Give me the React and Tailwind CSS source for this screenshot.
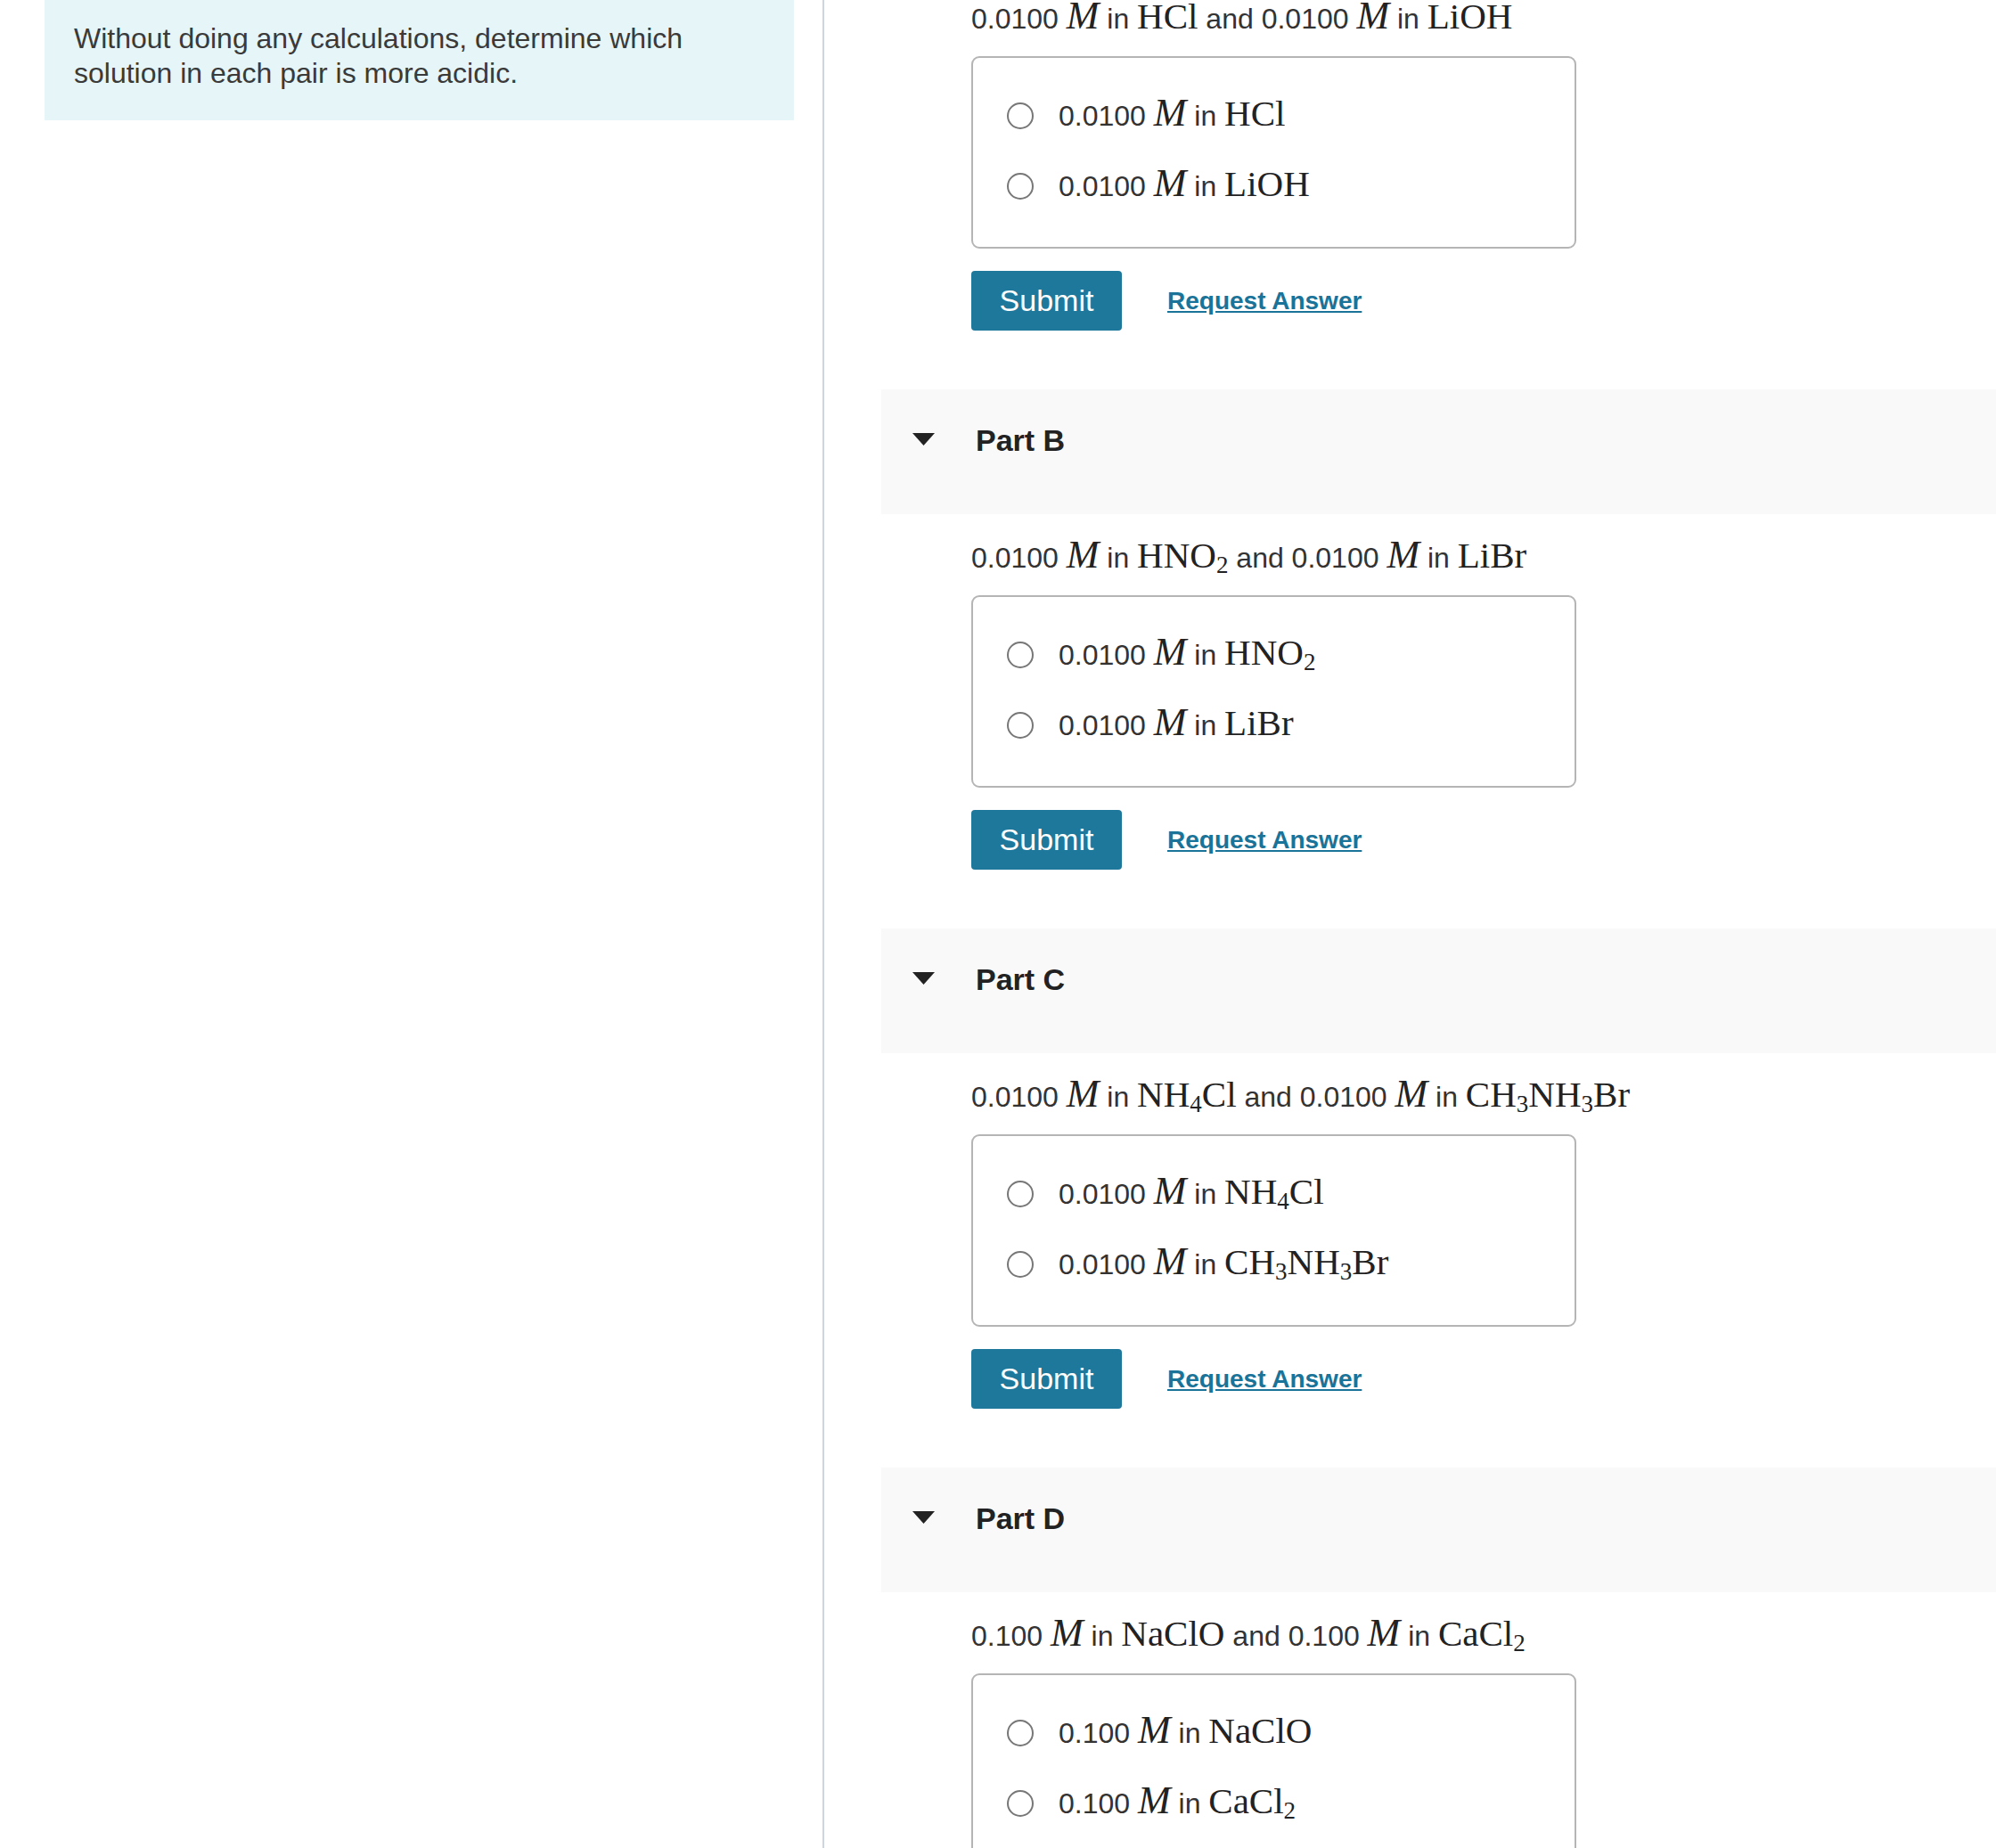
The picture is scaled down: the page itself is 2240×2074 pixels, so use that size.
import React from 'react';

// chemistry question page: scrolled past the Part A header
const serif = "font-['Liberation_Serif','Times_New_Roman',serif] text-[#222]";

function Chem({ children }) {
  return <span className={`${serif} text-[41px] leading-[36px]`}>{children}</span>;
}

function M() {
  return <span className={`${serif} text-[44px] leading-[36px] italic`}>M</span>;
}

function Sub({ children }) {
  return <span className="relative top-[6px] text-[27px]">{children}</span>;
}

function Conc({ n, f }) {
  return (
    <>
      {n} <M /> in <Chem>{f}</Chem>
    </>
  );
}

const parts = [
  {
    label: null,
    a: { n: '0.0100', f: 'HCl' },
    b: { n: '0.0100', f: 'LiOH' },
  },
  {
    label: 'Part B',
    a: { n: '0.0100', f: <>HNO<Sub>2</Sub></> },
    b: { n: '0.0100', f: 'LiBr' },
  },
  {
    label: 'Part C',
    a: { n: '0.0100', f: <>NH<Sub>4</Sub>Cl</> },
    b: { n: '0.0100', f: <>CH<Sub>3</Sub>NH<Sub>3</Sub>Br</> },
  },
  {
    label: 'Part D',
    a: { n: '0.100', f: 'NaClO' },
    b: { n: '0.100', f: <>CaCl<Sub>2</Sub></> },
  },
];

function Option({ name, item }) {
  return (
    <label className="flex h-[48px] items-center">
      <input
        type="radio"
        name={name}
        className="h-[30px] w-[30px] shrink-0 appearance-none rounded-full border-2 border-[#777] bg-white"
      />
      <span className="ml-[28px] text-[32px] leading-[48px] text-[#333]">
        <Conc n={item.n} f={item.f} />
      </span>
    </label>
  );
}

function Part({ part, idx }) {
  return (
    <section className={idx === 0 ? '' : 'mt-[66px]'}>
      {part.label && (
        <div className="flex h-[140px] items-start bg-[#f9f9f9] pl-[35px] pt-[38px]">
          <div className="flex h-[38px] items-center">
            <svg width="25" height="14" viewBox="0 0 25 14" className="mt-[-2px]">
              <polygon points="0,0 25,0 12.5,14" fill="#222" />
            </svg>
            <span className="ml-[46px] text-[34px] font-bold leading-[38px] text-[#222]">
              {part.label}
            </span>
          </div>
        </div>
      )}
      <div className={`pl-[101px] ${part.label ? 'pt-[28px]' : ''}`}>
        <p className="h-[40px] whitespace-nowrap text-[32px] leading-[40px] text-[#333]">
          <Conc n={part.a.n} f={part.a.f} /> and <Conc n={part.b.n} f={part.b.f} />
        </p>
        <div className="mt-[23px] flex h-[216px] w-[679px] flex-col gap-[31px] rounded-[9px] border-2 border-[#b5b5b5] pl-[38px] pt-[41px]">
          <Option name={`p${idx}`} item={part.a} />
          <Option name={`p${idx}`} item={part.b} />
        </div>
        <div className="mt-[25px] flex items-center">
          <button className="h-[67px] w-[169px] rounded-[4px] bg-[#1e789b] text-[34px] text-white">
            Submit
          </button>
          <a href="#" className="ml-[51px] text-[28px] font-bold text-[#1a7398] underline">
            Request Answer
          </a>
        </div>
      </div>
    </section>
  );
}

export default function App() {
  return (
    <div className="flex h-[2074px] w-[2240px] overflow-hidden bg-white font-['Liberation_Sans',Arial,sans-serif]">
      <div className="w-[925px] shrink-0 border-r-2 border-[#cdd6de] pl-[50px]">
        <div className="h-[135px] w-[841px] bg-[#e6f6f8] pl-[33px] pr-[33px] pt-[24px]">
          <p className="text-[32px] leading-[39px] text-[#3a3a3a]">
            Without doing any calculations, determine which solution in each pair is more acidic.
          </p>
        </div>
      </div>
      <div className="min-w-0 flex-1 pl-[64px]">
        {parts.map((p, i) => (
          <Part key={i} part={p} idx={i} />
        ))}
      </div>
    </div>
  );
}
